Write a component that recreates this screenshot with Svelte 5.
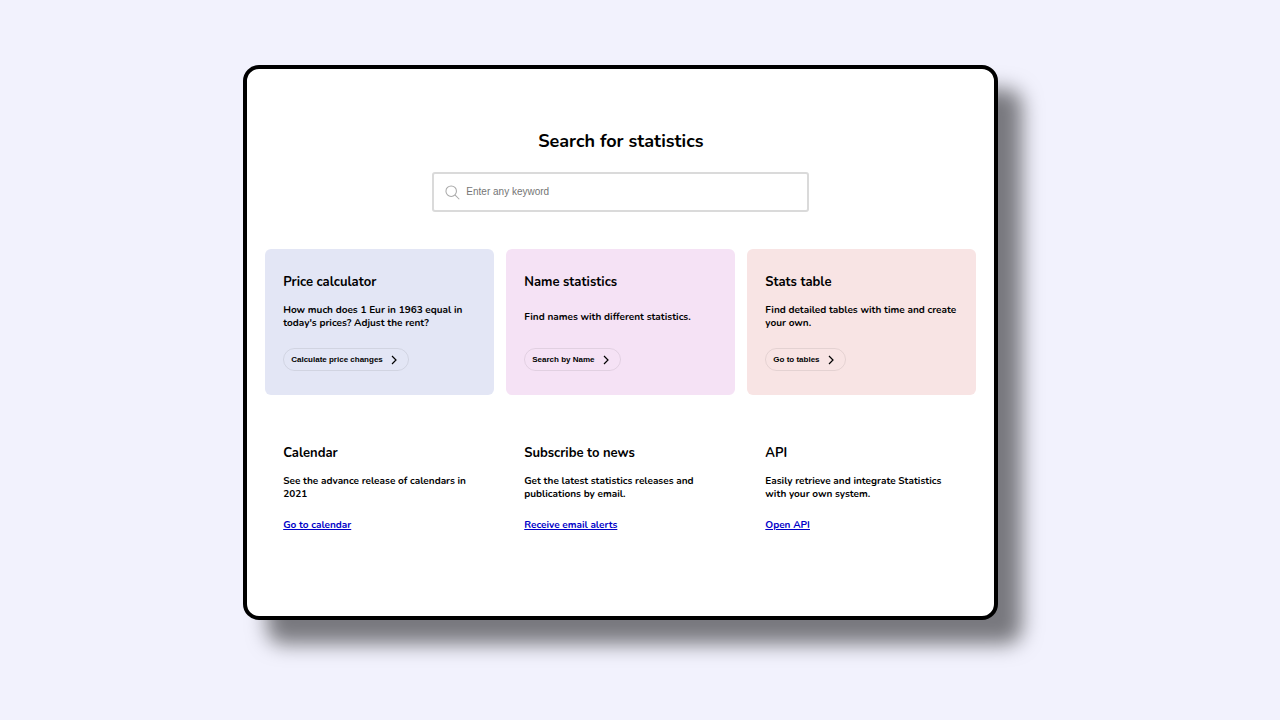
<script>
  const tools = [
    {
      title: "Price calculator",
      text: "How much does 1 Eur in 1963 equal in today's prices? Adjust the rent?",
      action: "Calculate price changes",
      tone: "blue",
    },
    {
      title: "Name statistics",
      text: "Find names with different statistics.",
      action: "Search by Name",
      tone: "violet",
    },
    {
      title: "Stats table",
      text: "Find detailed tables with time and create your own.",
      action: "Go to tables",
      tone: "red",
    },
  ];

  const links = [
    {
      title: "Calendar",
      text: "See the advance release of calendars in 2021",
      label: "Go to calendar",
      href: "#calendar",
    },
    {
      title: "Subscribe to news",
      text: "Get the latest statistics releases and publications by email.",
      label: "Receive email alerts",
      href: "#alerts",
    },
    {
      title: "API",
      text: "Easily retrieve and integrate Statistics with your own system.",
      label: "Open API",
      href: "#api",
    },
  ];

  let keyword = $state("");
</script>

<div class="page">
  <main class="window">
    <h1><label for="keyword">Search for statistics</label></h1>

    <form class="search" role="search" onsubmit={(e) => e.preventDefault()}>
      <svg viewBox="0 0 16 16" aria-hidden="true">
        <circle cx="6.6" cy="6.6" r="5.6" />
        <path d="M10.6 10.6 15.2 15.2" />
      </svg>
      <input id="keyword" type="text" placeholder="Enter any keyword" bind:value={keyword} />
    </form>

    <section class="grid">
      {#each tools as tool}
        <article class="card {tool.tone}">
          <h2>{tool.title}</h2>
          <p>{tool.text}</p>
          <button type="button">
            {tool.action}
            <svg viewBox="0 0 6 10" aria-hidden="true">
              <path d="M1 1l4 4-4 4" />
            </svg>
          </button>
        </article>
      {/each}
    </section>

    <section class="grid links">
      {#each links as link}
        <article class="card">
          <h2>{link.title}</h2>
          <p>{link.text}</p>
          <a href={link.href}>{link.label}</a>
        </article>
      {/each}
    </section>
  </main>
</div>

<style>
  :global(body) {
    background: #f2f2fd;
  }

  .page {
    box-sizing: border-box;
    padding: 65px 22vw 72px 19vw;
    font-family: Nunito, Lato, "Open Sans", sans-serif;
    font-weight: 700;
    color: #000;
  }

  .window {
    padding: 60px 18px;
    background: #fff;
    border: 4px solid #000;
    border-radius: 16px;
    box-shadow: 24px 24px 20px rgba(0, 0, 0, 0.5);
  }

  h1 {
    margin: 0 0 19px;
    font-size: 18px;
    line-height: 24px;
    text-align: center;
  }

  .search {
    box-sizing: border-box;
    display: flex;
    align-items: center;
    gap: 6px;
    width: 53%;
    height: 40px;
    margin: 0 auto 37px;
    padding: 0 11px;
    border: 2px solid #dadada;
    border-radius: 3px;
  }
  .search svg {
    flex: none;
    width: 15px;
    height: 15px;
    fill: none;
    stroke: #a8a8a8;
    stroke-width: 1.1;
  }
  .search input {
    flex: 1;
    min-width: 0;
    padding: 0;
    border: 0;
    outline: 0;
    background: none;
    font: 10px/16px "Liberation Sans", Arial, sans-serif;
  }
  .search input::placeholder {
    color: #757575;
  }

  .grid {
    display: grid;
    grid-template-columns: repeat(3, 1fr);
    gap: 12px;
  }

  .card {
    display: flex;
    flex-direction: column;
    align-items: flex-start;
    padding: 24px 18px;
    border-radius: 6px;
  }
  .blue { background: #e3e6f5; }
  .violet { background: #f5e2f5; }
  .red { background: #f8e4e4; }

  h2 {
    margin: 0 0 12px;
    font-size: 13px;
    line-height: 19px;
  }

  p {
    margin: auto 0;
    font-size: 10px;
    line-height: 13px;
  }

  button {
    display: flex;
    align-items: center;
    gap: 8px;
    height: 23px;
    margin-top: 18px;
    padding: 0 11px 0 7px;
    border: 1px solid rgba(0, 0, 0, 0.08);
    border-radius: 12px;
    background: none;
    font: 700 8px/12px "Liberation Sans", Arial, sans-serif;
    color: #000;
    white-space: nowrap;
    cursor: pointer;
  }
  button svg {
    width: 6px;
    height: 10px;
    fill: none;
    stroke: #000;
    stroke-width: 1.2;
  }

  .links {
    margin-top: 25px;
  }
  a {
    margin-top: 18px;
    font-size: 10px;
    line-height: 13px;
    color: #0000c8;
  }
</style>
